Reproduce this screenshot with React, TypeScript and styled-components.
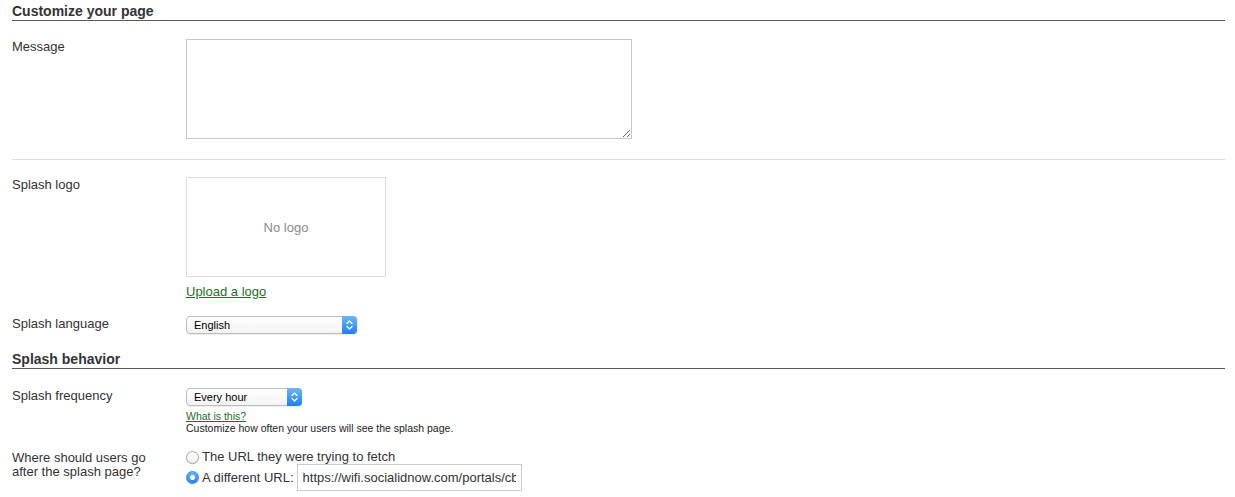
import React from "react";
import styled, { createGlobalStyle } from "styled-components";

const GlobalStyle = createGlobalStyle`
  html, body { margin: 0; padding: 0; background: #fff; }
  body {
    font-family: "Liberation Sans", Arial, Helvetica, sans-serif;
    color: #333;
    font-size: 13px;
  }
  * { box-sizing: border-box; }
`;

const Page = styled.div`
  padding: 0 10px 0 12px;
`;

const SectionTitle = styled.h2<{ $mt: number }>`
  margin: ${(p) => p.$mt}px 0 0 0;
  padding: 0 0 1px 0;
  font-size: 14px;
  line-height: 16px;
  font-weight: bold;
  color: #333;
  border-bottom: 1px solid #5a5a5a;
`;

const Row = styled.div<{ $pt: number; $divider?: boolean }>`
  display: grid;
  grid-template-columns: 174px 1fr;
  align-items: start;
  padding-top: ${(p) => p.$pt}px;
  padding-bottom: ${(p) => (p.$divider ? 20 : 0)}px;
  border-bottom: ${(p) => (p.$divider ? "1px solid #dddddd" : "none")};
`;

const Label = styled.label`
  font-size: 13px;
  line-height: 14px;
  color: #333;
  padding-top: 1px;
  padding-right: 12px;
`;

const Field = styled.div`
  display: flex;
  flex-direction: column;
  align-items: flex-start;
`;

const MessageArea = styled.textarea`
  width: 446px;
  height: 100px;
  border: 1px solid #c8c8c8;
  border-radius: 0;
  margin: 0;
  padding: 4px;
  font-family: "Liberation Sans", Arial, sans-serif;
  font-size: 13px;
  outline: none;
`;

const LogoBox = styled.div`
  width: 200px;
  height: 100px;
  border: 1px solid #dddddd;
  display: flex;
  align-items: center;
  justify-content: center;
  color: #8a8a8a;
  font-size: 13px;
`;

const UploadLink = styled.a`
  display: inline-block;
  margin-top: 7px;
  font-size: 13px;
  line-height: 16px;
  color: #22701f;
  text-decoration: underline;
  cursor: pointer;
`;

const SelectBox = styled.div<{ $w: number }>`
  display: inline-flex;
  align-items: stretch;
  width: ${(p) => p.$w}px;
  height: 18px;
  border: 1px solid #bdbdbd;
  border-radius: 4px;
  background: linear-gradient(#ffffff, #f3f3f3);
  box-shadow: 0 1px 1px rgba(0, 0, 0, 0.08);
`;

const SelectText = styled.span`
  flex: 1;
  font-size: 11px;
  line-height: 16px;
  padding-left: 7px;
  color: #000;
  white-space: nowrap;
  overflow: hidden;
`;

const SelectArrow = styled.span`
  width: 15px;
  margin: -1px -1px -1px 0;
  border-radius: 0 4px 4px 0;
  background: linear-gradient(#6db6fc, #1f7ff4);
  display: flex;
  align-items: center;
  justify-content: center;
`;

const HelpLink = styled.a`
  margin-top: 4px;
  font-size: 10.5px;
  line-height: 12px;
  color: #22701f;
  text-decoration: underline;
  cursor: pointer;
`;

const HelpText = styled.div`
  font-size: 10.5px;
  line-height: 12px;
  color: #222;
`;

const RadioGroup = styled.div`
  display: flex;
  flex-direction: column;
`;

const Option = styled.label<{ $h: number }>`
  display: flex;
  align-items: center;
  height: ${(p) => p.$h}px;
  font-size: 13px;
  line-height: 14px;
  color: #333;
  white-space: nowrap;
`;

const Radio = styled.span<{ $checked?: boolean }>`
  display: inline-block;
  width: 13px;
  height: 13px;
  border-radius: 50%;
  margin-right: 3px;
  flex: none;
  border: 1px solid ${(p) => (p.$checked ? "#3a87e6" : "#a4a4a4")};
  background: ${(p) =>
    p.$checked
      ? "radial-gradient(circle, #fff 0 2.2px, transparent 2.8px), linear-gradient(#6ab2fa, #2a83f1)"
      : "linear-gradient(#ffffff, #f0f0f0)"};
  box-shadow: 0 0.5px 1px rgba(0, 0, 0, 0.12);
`;

const UrlInput = styled.input`
  margin-left: 3px;
  width: 225px;
  height: 27px;
  border: 1px solid #cccccc;
  border-radius: 0;
  padding: 0 5px;
  font-family: "Liberation Sans", Arial, sans-serif;
  font-size: 13px;
  color: #333;
  outline: none;
`;

function Chevrons() {
  return (
    <svg width="15" height="16" viewBox="0 0 15 16">
      <path d="M5 6.5 L7.5 4 L10 6.5" fill="none" stroke="#fff" strokeWidth="1.3" strokeLinecap="round" strokeLinejoin="round" />
      <path d="M5 9.5 L7.5 12 L10 9.5" fill="none" stroke="#fff" strokeWidth="1.3" strokeLinecap="round" strokeLinejoin="round" />
    </svg>
  );
}

function Select({ value, width }: { value: string; width: number }) {
  return (
    <SelectBox $w={width}>
      <SelectText>{value}</SelectText>
      <SelectArrow>
        <Chevrons />
      </SelectArrow>
    </SelectBox>
  );
}

export default function App() {
  return (
    <>
      <GlobalStyle />
      <Page>
        <SectionTitle $mt={3}>Customize your page</SectionTitle>
        <Row $pt={18} $divider>
          <Label>Message</Label>
          <Field>
            <MessageArea />
          </Field>
        </Row>
        <Row $pt={17}>
          <Label>Splash logo</Label>
          <Field>
            <LogoBox>No logo</LogoBox>
            <UploadLink>Upload a logo</UploadLink>
          </Field>
        </Row>
        <Row $pt={16}>
          <Label>Splash language</Label>
          <Field>
            <Select value="English" width={171} />
          </Field>
        </Row>
        <SectionTitle $mt={17}>Splash behavior</SectionTitle>
        <Row $pt={19}>
          <Label>Splash frequency</Label>
          <Field>
            <Select value="Every hour" width={116} />
            <HelpLink>What is this?</HelpLink>
            <HelpText>Customize how often your users will see the splash page.</HelpText>
          </Field>
        </Row>
        <Row $pt={16}>
          <Label>Where should users go after the splash page?</Label>
          <RadioGroup>
            <Option $h={14}>
              <Radio />
              The URL they were trying to fetch
            </Option>
            <Option $h={27}>
              <Radio $checked />
              A different URL:
              <UrlInput defaultValue="https://wifi.socialidnow.com/portals/cb4f2a9e/splash" />
            </Option>
          </RadioGroup>
        </Row>
      </Page>
    </>
  );
}
